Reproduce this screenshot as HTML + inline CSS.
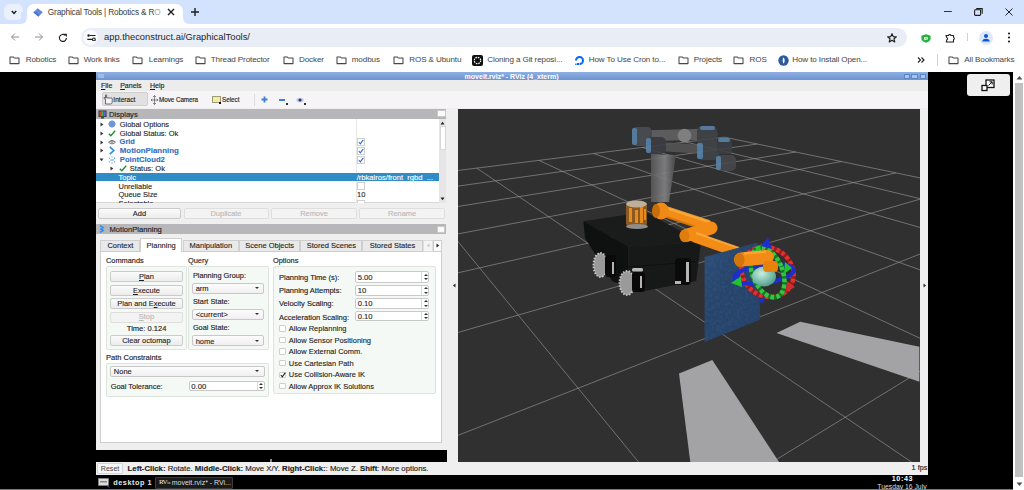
<!DOCTYPE html>
<html><head><meta charset="utf-8">
<style>
*{box-sizing:border-box;margin:0;padding:0}
html,body{width:1024px;height:490px;overflow:hidden;background:#000;font-family:"Liberation Sans",sans-serif}
.a{position:absolute}
#tabbar{left:0;top:0;width:1024px;height:24px;background:#d3e3fd}
#toolbar{left:0;top:24px;width:1024px;height:25px;background:#fff}
#bmbar{left:0;top:49px;width:1024px;height:23px;background:#fff}
.t{position:absolute;white-space:nowrap;line-height:1}
.bm{position:absolute;top:56.1px;font-size:8.1px;letter-spacing:-.12px;color:#444;white-space:nowrap;line-height:1}
.fold{position:absolute;top:55px;width:11px;height:9px}
.r{color:#1e1e1e;-webkit-text-stroke:.15px #1e1e1e}
.tx{-webkit-text-stroke:.12px currentColor}
.btn{background:linear-gradient(#fbfbfb,#ececec);border:1px solid #cbcbcb;border-radius:2px;display:flex;align-items:center;justify-content:center}
.btn span{font-size:7.45px;color:#1e1e1e;white-space:nowrap;line-height:1;-webkit-text-stroke:.12px currentColor}
.btn.dis span{color:#b9b9b9}
.btn.dis{background:#f3f3f3;border-color:#dedede}
.tab{top:239.5px;height:11.7px;background:#e9e9e9;border:1px solid #cfcfcf;border-bottom:none;display:flex;align-items:center;justify-content:center}
.tab span{font-size:7.5px;color:#1e1e1e;white-space:nowrap;line-height:1;-webkit-text-stroke:.12px currentColor}
.tab.act{top:238.4px;height:13.6px;background:#fff;z-index:2}
.grp{background:#f5f9f5;border:1px solid #dde3dd;border-radius:2px}
.cmb{background:linear-gradient(#fdfcfd,#f1eff1);border:1px solid #c8c8c8;border-radius:2px}
.cmb span{position:absolute;left:2.5px;top:50%;transform:translateY(-45%);font-size:7.5px;color:#1e1e1e;line-height:1;white-space:nowrap;-webkit-text-stroke:.12px #1e1e1e}
.cmb i{position:absolute;right:4.5px;top:50%;margin-top:-1px;border-left:2px solid transparent;border-right:2px solid transparent;border-top:2.5px solid #333}
.spn{background:#fff;border:1px solid #c9c9c9;border-radius:2px}
.spn span{position:absolute;left:1.3px;top:50%;transform:translateY(-42%);font-size:7.7px;color:#1e1e1e;line-height:1;white-space:nowrap;-webkit-text-stroke:.12px #1e1e1e}
.spn i{position:absolute;right:0;top:0;bottom:0;width:7px;border-left:1px solid #d8d8d8}
.spn i:before{content:"";position:absolute;left:1.5px;top:1.2px;border-left:2px solid transparent;border-right:2px solid transparent;border-bottom:2.4px solid #333}
.spn i:after{content:"";position:absolute;left:1.5px;bottom:1.2px;border-left:2px solid transparent;border-right:2px solid transparent;border-top:2.4px solid #333}
.chk{position:absolute;left:279px;width:6.5px;height:6.5px;background:#fff;border:1px solid #cfcfcf;border-radius:1px}
</style></head><body>
<!-- Chrome tab bar -->
<div class="a" id="tabbar"></div>
<div class="a" style="left:4.3px;top:4px;width:18.7px;height:16px;border-radius:6px;background:#eaf0fc"></div>
<svg class="a" style="left:10.5px;top:9.6px" width="6" height="5" viewBox="0 0 6 5"><path d="M.8 1 L3 3.4 L5.2 1" fill="none" stroke="#1f1f1f" stroke-width="1.5"/></svg>
<div class="a" style="left:27px;top:4px;width:156px;height:20px;background:#fff;border-radius:7px 7px 0 0"></div>
<div class="a" style="left:21px;top:18px;width:6px;height:6px;background:#fff"></div>
<div class="a" style="left:21px;top:12px;width:6px;height:12px;background:#d3e3fd;border-radius:0 0 6px 0"></div>
<div class="a" style="left:183px;top:18px;width:6px;height:6px;background:#fff"></div>
<div class="a" style="left:183px;top:12px;width:6px;height:12px;background:#d3e3fd;border-radius:0 0 0 6px"></div>
<svg class="a" style="left:32.5px;top:7.5px" width="10" height="9" viewBox="0 0 10 9"><defs><linearGradient id="fv" x1="0" y1="1" x2="1" y2="0"><stop offset="0" stop-color="#0d3fa8"/><stop offset=".5" stop-color="#5f8fe0"/><stop offset="1" stop-color="#7a5cc8"/></linearGradient></defs><path d="M.3 4.6 L4.6 .3 L9.7 4.3 L5.4 8.7 Z" fill="url(#fv)"/></svg>
<div class="t" style="left:47.8px;top:8.3px;font-size:8.3px;letter-spacing:-.19px;color:#3c3c3c">Graphical Tools | Robotics &amp; R<span style="color:#aaa">O</span></div>
<svg class="a" style="left:167px;top:8px" width="8" height="8" viewBox="0 0 8 8"><path d="M1 1L7 7M7 1L1 7" stroke="#1f1f1f" stroke-width="1.4"/></svg>
<svg class="a" style="left:190px;top:7px" width="10" height="10" viewBox="0 0 10 10"><path d="M5 1V9M1 5H9" stroke="#1f1f1f" stroke-width="1.4"/></svg>
<svg class="a" style="left:944.2px;top:11px" width="8" height="2"><rect width="7.8" height="1" fill="#333"/></svg>
<svg class="a" style="left:973.5px;top:7.5px" width="9" height="8" viewBox="0 0 9 8"><rect x=".6" y="1.8" width="6" height="5.6" rx=".8" fill="none" stroke="#1f1f1f" stroke-width="1.1"/><path d="M2.2 .6H8.2V5.8" fill="none" stroke="#1f1f1f" stroke-width="1.1"/></svg>
<svg class="a" style="left:1004.5px;top:7.5px" width="8" height="8" viewBox="0 0 8 8"><path d="M.5 .5L7.5 7.5M7.5 .5L.5 7.5" stroke="#1f1f1f" stroke-width="1"/></svg>

<!-- Toolbar -->
<div class="a" id="toolbar"></div>
<svg class="a" style="left:10px;top:32.3px" width="10" height="10" viewBox="0 0 10 10"><path d="M9 5H1.5M5 1.5L1.5 5L5 8.5" fill="none" stroke="#8a8f94" stroke-width="1"/></svg>
<svg class="a" style="left:34px;top:32.3px" width="10" height="10" viewBox="0 0 10 10"><path d="M1 5H8.5M5 1.5L8.5 5L5 8.5" fill="none" stroke="#8a8f94" stroke-width="1"/></svg>
<svg class="a" style="left:57.5px;top:32.5px" width="10" height="10" viewBox="0 0 10 10"><path d="M8.4 5A3.5 3.5 0 1 1 7.2 2.3" fill="none" stroke="#1f1f1f" stroke-width="1.15"/><path d="M5.6 .8H8.9V4.1Z" fill="#1f1f1f"/></svg>
<div class="a" style="left:80.6px;top:27.6px;width:826.4px;height:19.8px;border-radius:10px;background:#e9eef6"></div>
<div class="a" style="left:83px;top:29.5px;width:15px;height:15px;border-radius:8px;background:#f8fafd"></div>
<svg class="a" style="left:86.8px;top:34.3px" width="9" height="7" viewBox="0 0 9 7"><circle cx="1.6" cy="1.5" r="1.2" fill="#1f1f1f"/><path d="M3 1.5H8.5M.3 5.4H5" stroke="#1f1f1f" stroke-width="1.1"/><circle cx="6.9" cy="5.4" r="1.4" fill="none" stroke="#1f1f1f" stroke-width="1.1"/></svg>
<div class="t" style="left:104px;top:32.6px;font-size:9.35px;color:#1f1f1f">app.theconstruct.ai/GraphicalTools/</div>
<svg class="a" style="left:886.5px;top:32.8px" width="10" height="10" viewBox="0 0 11 11"><path d="M5.5 0.8L6.9 4L10.3 4.2L7.7 6.4L8.5 9.8L5.5 8L2.5 9.8L3.3 6.4L0.7 4.2L4.1 4Z" fill="none" stroke="#1f1f1f" stroke-width="1.3" stroke-linejoin="round"/></svg>
<svg class="a" style="left:920.7px;top:33.5px" width="10" height="9" viewBox="0 0 10 9"><path d="M5 .3L9.6 1.8V4.6C9.6 6.8 7.4 8.2 5 8.8C2.6 8.2 .4 6.8 .4 4.6V1.8Z" fill="#22b33a"/><path d="M3 3.2H7V5.6H5L3.6 6.6V5.6H3Z" fill="#fff"/><circle cx="5" cy="4.4" r=".6" fill="#22b33a"/></svg>
<svg class="a" style="left:944.5px;top:32.5px" width="11" height="10" viewBox="0 0 11 10"><path d="M1 2.5H3.5A1.3 1.3 0 0 1 6 2.5H8.5V4.2A1.3 1.3 0 0 1 8.5 6.6V9H1.3L1.8 6.8A1.2 1.2 0 0 0 1.8 4.6Z" fill="none" stroke="#1f1f1f" stroke-width="1.1" stroke-linejoin="round"/></svg>
<div class="a" style="left:967.3px;top:33px;width:1px;height:8px;background:#c7d3e6"></div>
<div class="a" style="left:979px;top:31px;width:13.5px;height:13.5px;border-radius:7px;background:#dde8fb"></div>
<svg class="a" style="left:981px;top:33px" width="10" height="10" viewBox="0 0 10 10"><circle cx="5" cy="3" r="2" fill="#0b57d0"/><path d="M1.2 8.6C1.5 6.4 3.2 5.7 5 5.7C6.8 5.7 8.5 6.4 8.8 8.6Z" fill="#0b57d0"/></svg>
<svg class="a" style="left:1007px;top:32px" width="4" height="11" viewBox="0 0 4 11"><circle cx="2" cy="1.5" r="1.1" fill="#1f1f1f"/><circle cx="2" cy="5.5" r="1.1" fill="#1f1f1f"/><circle cx="2" cy="9.5" r="1.1" fill="#1f1f1f"/></svg>

<!-- Bookmarks -->
<div class="a" id="bmbar"></div>
<svg class="a" style="left:9.00px;top:55px" width="11" height="10" viewBox="0 0 11 10"><path d="M1 1.9H4.2L5.3 3H10V8.6H1Z" fill="none" stroke="#474747" stroke-width="1.05" stroke-linejoin="round"/></svg>
<div class="bm" style="left:25.75px">Robotics</div>
<svg class="a" style="left:68.00px;top:55px" width="11" height="10" viewBox="0 0 11 10"><path d="M1 1.9H4.2L5.3 3H10V8.6H1Z" fill="none" stroke="#474747" stroke-width="1.05" stroke-linejoin="round"/></svg>
<div class="bm" style="left:83.75px">Work links</div>
<svg class="a" style="left:132.00px;top:55px" width="11" height="10" viewBox="0 0 11 10"><path d="M1 1.9H4.2L5.3 3H10V8.6H1Z" fill="none" stroke="#474747" stroke-width="1.05" stroke-linejoin="round"/></svg>
<div class="bm" style="left:148.75px">Learnings</div>
<svg class="a" style="left:195.00px;top:55px" width="11" height="10" viewBox="0 0 11 10"><path d="M1 1.9H4.2L5.3 3H10V8.6H1Z" fill="none" stroke="#474747" stroke-width="1.05" stroke-linejoin="round"/></svg>
<div class="bm" style="left:210.75px">Thread Protector</div>
<svg class="a" style="left:283.00px;top:55px" width="11" height="10" viewBox="0 0 11 10"><path d="M1 1.9H4.2L5.3 3H10V8.6H1Z" fill="none" stroke="#474747" stroke-width="1.05" stroke-linejoin="round"/></svg>
<div class="bm" style="left:299.00px">Docker</div>
<svg class="a" style="left:336.00px;top:55px" width="11" height="10" viewBox="0 0 11 10"><path d="M1 1.9H4.2L5.3 3H10V8.6H1Z" fill="none" stroke="#474747" stroke-width="1.05" stroke-linejoin="round"/></svg>
<div class="bm" style="left:351.75px">modbus</div>
<svg class="a" style="left:393.00px;top:55px" width="11" height="10" viewBox="0 0 11 10"><path d="M1 1.9H4.2L5.3 3H10V8.6H1Z" fill="none" stroke="#474747" stroke-width="1.05" stroke-linejoin="round"/></svg>
<div class="bm" style="left:409.25px">ROS &amp; Ubuntu</div>
<svg class="a" style="left:472.25px;top:54.5px" width="11" height="11" viewBox="0 0 11 11"><rect width="11" height="11" rx="2" fill="#111"/><circle cx="5.5" cy="5.5" r="3.2" fill="none" stroke="#fff" stroke-width="1.2" stroke-dasharray="1.6 0.9"/></svg>
<div class="bm" style="left:487.25px">Cloning a Git reposi...</div>
<svg class="a" style="left:574.00px;top:54.5px" width="11" height="11" viewBox="0 0 11 11"><path d="M5.5 10V8A2.5 2.5 0 1 0 3 5.5H1A4.5 4.5 0 1 1 5.5 10Z" fill="#0069ff"/><rect x="3" y="8" width="2" height="2" fill="#0069ff"/><rect x="1.2" y="8.6" width="1.4" height="1.4" fill="#0069ff"/></svg>
<div class="bm" style="left:588.75px">How To Use Cron to...</div>
<svg class="a" style="left:677.50px;top:55px" width="11" height="10" viewBox="0 0 11 10"><path d="M1 1.9H4.2L5.3 3H10V8.6H1Z" fill="none" stroke="#474747" stroke-width="1.05" stroke-linejoin="round"/></svg>
<div class="bm" style="left:693.75px">Projects</div>
<svg class="a" style="left:733.25px;top:55px" width="11" height="10" viewBox="0 0 11 10"><path d="M1 1.9H4.2L5.3 3H10V8.6H1Z" fill="none" stroke="#474747" stroke-width="1.05" stroke-linejoin="round"/></svg>
<div class="bm" style="left:749.50px">ROS</div>
<svg class="a" style="left:777.50px;top:54.5px" width="11" height="11" viewBox="0 0 11 11"><circle cx="5.5" cy="5.5" r="5.2" fill="#2d5aa0"/><path d="M5.5 2.5C7 3.5 7 7.5 5.5 8.5C4.4 7.5 4.4 3.5 5.5 2.5Z" fill="#fff"/></svg>
<div class="bm" style="left:792.25px">How to Install Open...</div>
<svg class="a" style="left:948.00px;top:55px" width="11" height="10" viewBox="0 0 11 10"><path d="M1 1.9H4.2L5.3 3H10V8.6H1Z" fill="none" stroke="#474747" stroke-width="1.05" stroke-linejoin="round"/></svg>
<div class="bm" style="left:964.25px">All Bookmarks</div>
<svg class="a" style="left:917px;top:56px" width="8" height="8" viewBox="0 0 8 8"><path d="M1 1.5L3.5 4L1 6.5M4.5 1.5L7 4L4.5 6.5" fill="none" stroke="#1f1f1f" stroke-width="1.1"/></svg>
<div class="a" style="left:937px;top:54px;width:1px;height:12px;background:#c7d3e6"></div>

<!-- RViz window -->
<div class="a" style="left:96px;top:72px;width:832px;height:390px;background:#efefef"></div>
<div class="a" style="left:96px;top:72px;width:832px;height:8px;background:linear-gradient(#8fb0e2,#6c93d3)"></div>
<div class="a" style="left:98px;top:74px;width:6px;height:4px;background:#a9c1ea;opacity:.8"></div>
<div class="t" style="left:464.6px;top:72.6px;font-size:7px;font-weight:bold;color:#fff">moveit.rviz* - RViz (4_xterm)</div>
<div class="a" style="left:903.5px;top:73.7px;width:6.8px;height:5.5px;background:#a8c2ea;border:1px solid #5d86c9"></div>
<div class="a" style="left:911.4px;top:73.7px;width:6.8px;height:5.5px;background:#a8c2ea;border:1px solid #5d86c9"></div>
<div class="a" style="left:919.7px;top:73.7px;width:6.8px;height:5.5px;background:#a8c2ea;border:1px solid #5d86c9"></div>
<!-- menubar -->
<div class="a" style="left:96px;top:80px;width:832px;height:11px;background:#ececec"></div>
<div class="t r" style="left:101px;top:81.8px;font-size:7px"><u>F</u>ile</div>
<div class="t r" style="left:120.2px;top:81.8px;font-size:7px"><u>P</u>anels</div>
<div class="t r" style="left:150px;top:81.8px;font-size:7px"><u>H</u>elp</div>
<!-- toolbar -->
<div class="a" style="left:96px;top:91px;width:832px;height:17px;background:#f6f4f6"></div>
<div class="a" style="left:102px;top:92px;width:45.5px;height:14.4px;background:#e1e1e1;border:1px solid #cfcfcf;border-radius:2px"></div>
<svg class="a" style="left:103px;top:94px" width="10" height="11" viewBox="0 0 10 11"><path d="M2.5 10V5.5L1 4.5V3.5L2.5 4.2V1.2C2.5 0.6 3.6 0.6 3.6 1.2V4H8.5C9.2 4 9.2 4.6 9.2 5V8C9.2 9.4 8.4 10 7.5 10Z" fill="#f4f4f4" stroke="#333" stroke-width=".7"/></svg>
<div class="t r" style="left:113.3px;top:97px;font-size:6.6px">Interact</div>
<svg class="a" style="left:149.5px;top:94.5px" width="9" height="10" viewBox="0 0 9 10"><path d="M4.5 0.5V9.5M1 5H8M4.5 0.5L3 2M4.5 0.5L6 2M4.5 9.5L3 8M4.5 9.5L6 8M1 5L2.3 3.8M1 5L2.3 6.2M8 5L6.7 3.8M8 5L6.7 6.2" stroke="#555" stroke-width=".7" fill="none"/></svg>
<div class="t r" style="left:159px;top:97px;font-size:6.3px;letter-spacing:-.05px">Move Camera</div>
<div class="a" style="left:212px;top:95.5px;width:8.5px;height:7.5px;background:#f3eba0;border:1px solid #9c9c7c"></div>
<div class="a" style="left:219px;top:101.5px;width:2px;height:2px;background:#111"></div>
<div class="t r" style="left:222px;top:97px;font-size:6.3px">Select</div>
<div class="a" style="left:254px;top:94px;width:1px;height:12px;background:#dcdcdc"></div>
<svg class="a" style="left:260.5px;top:96px" width="7" height="7" viewBox="0 0 7 7"><path d="M3.5 0.5V6.5M0.5 3.5H6.5" stroke="#3f7fd0" stroke-width="1.8"/></svg>
<div class="a" style="left:278.8px;top:98.6px;width:6.5px;height:2px;background:#3f7fd0"></div>
<div class="a" style="left:286px;top:103px;width:2px;height:1.5px;background:#333"></div>
<svg class="a" style="left:296px;top:96.5px" width="8" height="6" viewBox="0 0 8 6"><ellipse cx="4" cy="3" rx="3.8" ry="2.3" fill="#c8d0e0"/><circle cx="4" cy="3" r="1.6" fill="#223a8c"/></svg>
<div class="a" style="left:304px;top:103px;width:2px;height:1.5px;background:#333"></div>

<!-- Displays panel -->
<div class="a" style="left:96px;top:109.3px;width:350px;height:9.9px;background:#b7b6b9"></div>
<svg class="a" style="left:98px;top:110px" width="9" height="9" viewBox="0 0 9 9"><rect x=".5" y=".5" width="8" height="6.5" fill="#333"/><rect x="1.3" y="1.3" width="2.1" height="5" fill="#e04040"/><rect x="3.4" y="1.3" width="2.1" height="5" fill="#40c040"/><rect x="5.5" y="1.3" width="2.2" height="5" fill="#6060e0"/><rect x="3" y="7.2" width="3" height="1.3" fill="#333"/></svg>
<div class="t r" style="left:109px;top:111px;font-size:7.6px">Displays</div>
<div class="a" style="left:436.5px;top:110.4px;width:9px;height:7px;background:#fafafa;border:1px solid #c8c8c8"></div>
<div class="a" style="left:96px;top:119px;width:350px;height:84px;background:#fff;border-bottom:1px solid #d8d8d8"></div>
<div class="a" style="left:356px;top:119px;width:1px;height:84px;background:#e8e8e8"></div>
<!-- scrollbar -->
<div class="a" style="left:439px;top:119px;width:7px;height:84px;background:#e6e6e6"></div>
<div class="a" style="left:439.5px;top:126px;width:6px;height:24px;background:#fff;border:1px solid #d6d6d6"></div>
<svg class="a" style="left:440px;top:120.5px" width="5" height="4" viewBox="0 0 5 4"><path d="M0.5 3.5L2.5 0.8L4.5 3.5Z" fill="#222"/></svg>
<svg class="a" style="left:440px;top:197px" width="5" height="4" viewBox="0 0 5 4"><path d="M0.5 0.5L2.5 3.2L4.5 0.5Z" fill="#222"/></svg>
<!--TREE--><div class="a" style="left:96px;top:119px;width:343px;height:84px;overflow:hidden"><div class="a" style="left:-96px;top:-119px;width:1024px;height:490px"><svg class="a" style="left:99.5px;top:121.9px" width="4" height="5" viewBox="0 0 4 5"><path d="M.5 .5L3.3 2.5L.5 4.5Z" fill="#333"/></svg>
<svg class="a" style="left:107.5px;top:120.4px" width="8" height="8" viewBox="0 0 8 8"><path d="M4 .3L6.6 1.4L7.7 4L6.6 6.6L4 7.7L1.4 6.6L.3 4L1.4 1.4Z" fill="#6f97d8"/></svg>
<div class="t tx" style="left:119.7px;top:120.66px;font-size:7.48px;color:#1e1e1e">Global Options</div>
<svg class="a" style="left:99.5px;top:130.7px" width="4" height="5" viewBox="0 0 4 5"><path d="M.5 .5L3.3 2.5L.5 4.5Z" fill="#333"/></svg>
<svg class="a" style="left:108px;top:129.7px" width="8" height="7" viewBox="0 0 8 7"><path d="M.8 3.8L2.8 5.8L7.2 .8" fill="none" stroke="#1e8a2a" stroke-width="1.3"/></svg>
<div class="t tx" style="left:119.7px;top:129.50px;font-size:7.48px;color:#1e1e1e">Global Status: Ok</div>
<svg class="a" style="left:99.5px;top:139.6px" width="4" height="5" viewBox="0 0 4 5"><path d="M.5 .5L3.3 2.5L.5 4.5Z" fill="#333"/></svg>
<svg class="a" style="left:107.5px;top:139.1px" width="8" height="6" viewBox="0 0 8 6"><path d="M.5 3.2Q4 -.5 7.5 3.2Q4 6.5 .5 3.2Z" fill="none" stroke="#777" stroke-width="1"/><path d="M2 2.6H6M2.5 3.8H5.5" stroke="#777" stroke-width=".8"/></svg>
<div class="t tx" style="left:119.6px;top:138.36px;font-size:7.44px;font-weight:bold;color:#2f6fc0">Grid</div>
<svg class="a" style="left:99.5px;top:148.4px" width="4" height="5" viewBox="0 0 4 5"><path d="M.5 .5L3.3 2.5L.5 4.5Z" fill="#333"/></svg>
<svg class="a" style="left:109px;top:146.4px" width="6" height="9" viewBox="0 0 6 9"><path d="M.8 .8L4.8 4.5L.8 8.2" fill="none" stroke="#2b8ee8" stroke-width="1.7"/></svg>
<div class="t tx" style="left:119.8px;top:146.99px;font-size:7.86px;font-weight:bold;color:#2f6fc0">MotionPlanning</div>
<svg class="a" style="left:98.5px;top:158.3px" width="5" height="4" viewBox="0 0 5 4"><path d="M.5 .5L4.5 .5L2.5 3.3Z" fill="#333"/></svg>
<svg class="a" style="left:107.5px;top:155.8px" width="8" height="8" viewBox="0 0 8 8"><g fill="#3a8fe0"><circle cx="4" cy="4" r=".8"/><circle cx="1.4" cy="2.2" r=".6"/><circle cx="6.6" cy="2.2" r=".6"/><circle cx="1.4" cy="5.8" r=".6"/><circle cx="6.6" cy="5.8" r=".6"/><circle cx="4" cy=".8" r=".6"/><circle cx="4" cy="7.2" r=".6"/><circle cx="2.6" cy="4" r=".5"/><circle cx="5.4" cy="4" r=".5"/></g></svg>
<div class="t tx" style="left:119.8px;top:155.93px;font-size:7.66px;font-weight:bold;color:#2f6fc0">PointCloud2</div>
<svg class="a" style="left:109.9px;top:166.1px" width="4" height="5" viewBox="0 0 4 5"><path d="M.5 .5L3.3 2.5L.5 4.5Z" fill="#333"/></svg>
<svg class="a" style="left:118.6px;top:165.1px" width="8" height="7" viewBox="0 0 8 7"><path d="M.8 3.8L2.8 5.8L7.2 .8" fill="none" stroke="#1e8a2a" stroke-width="1.3"/></svg>
<div class="t tx" style="left:129.8px;top:164.84px;font-size:7.52px;color:#1e1e1e">Status: Ok</div>
<div class="a" style="left:96px;top:172.7px;width:343px;height:8.4px;background:#308cc6"></div>
<div class="t tx" style="left:118.5px;top:173.70px;font-size:7.48px;color:#fff">Topic</div>
<div class="t tx" style="left:356.7px;top:173.64px;font-size:7.6px;color:#fff">/rbkairos/front_rgbd_...</div>
<div class="t tx" style="left:118.5px;top:182.54px;font-size:7.48px;color:#1e1e1e">Unreliable</div>
<div class="a" style="left:357px;top:182.3px;width:8px;height:8px;background:#fff;border:1px solid #cfcfcf"></div>
<div class="t tx" style="left:118.5px;top:191.38px;font-size:7.48px;color:#1e1e1e">Queue Size</div>
<div class="t tx" style="left:357px;top:191.38px;font-size:7.48px;color:#1e1e1e">10</div>
<div class="t tx" style="left:118.5px;top:200.22px;font-size:7.48px;color:#1e1e1e">Selectable</div>
<div class="a" style="left:357px;top:138.1px;width:8px;height:8px;background:#fff;border:1px solid #cfcfcf"></div><svg class="a" style="left:358px;top:139.1px" width="6" height="6" viewBox="0 0 6 6"><path d="M.8 3L2.3 4.8L5.3 .8" fill="none" stroke="#2f6fc0" stroke-width="1.1"/></svg>
<div class="a" style="left:357px;top:146.9px;width:8px;height:8px;background:#fff;border:1px solid #cfcfcf"></div><svg class="a" style="left:358px;top:147.9px" width="6" height="6" viewBox="0 0 6 6"><path d="M.8 3L2.3 4.8L5.3 .8" fill="none" stroke="#2f6fc0" stroke-width="1.1"/></svg>
<div class="a" style="left:357px;top:155.8px;width:8px;height:8px;background:#fff;border:1px solid #cfcfcf"></div><svg class="a" style="left:358px;top:156.8px" width="6" height="6" viewBox="0 0 6 6"><path d="M.8 3L2.3 4.8L5.3 .8" fill="none" stroke="#2f6fc0" stroke-width="1.1"/></svg>
<div class="a" style="left:357px;top:200.0px;width:8px;height:8px;background:#fff;border:1px solid #cfcfcf"></div></div></div><!--/TREE-->
<!-- buttons row -->
<div class="btn a" style="left:97.6px;top:208.4px;width:83.7px;height:11px"><span>Add</span></div>
<div class="btn a dis" style="left:183.5px;top:208.4px;width:85px;height:11px"><span>Duplicate</span></div>
<div class="btn a dis" style="left:271px;top:208.4px;width:86px;height:11px"><span>Remove</span></div>
<div class="btn a dis" style="left:359px;top:208.4px;width:86.3px;height:11px"><span>Rename</span></div>

<!-- MotionPlanning panel -->
<div class="a" style="left:96px;top:224.1px;width:350px;height:9.9px;background:#b7b6b9"></div>
<svg class="a" style="left:98.5px;top:225.2px" width="6" height="8" viewBox="0 0 6 8"><path d="M1 .6L4.2 2.6L1.8 4L4.2 5.4L1 7.4" fill="none" stroke="#2b8ee8" stroke-width="1.5"/></svg>
<div class="t r" style="left:109.5px;top:225.8px;font-size:7.6px">MotionPlanning</div>
<div class="a" style="left:436.6px;top:226px;width:8.7px;height:7.2px;background:#fafafa;border:1px solid #c8c8c8"></div>

<!-- tabs -->
<div class="a" style="left:100.4px;top:251px;width:341.6px;height:191.8px;background:#fff;border:1px solid #cdcdcd"></div>
<div class="tab a" style="left:100.4px;width:40px"><span>Context</span></div>
<div class="tab a act" style="left:140.2px;width:42px"><span>Planning</span></div>
<div class="tab a" style="left:182.7px;width:56.3px"><span>Manipulation</span></div>
<div class="tab a" style="left:239px;width:61.4px"><span>Scene Objects</span></div>
<div class="tab a" style="left:300.4px;width:62px"><span>Stored Scenes</span></div>
<div class="tab a" style="left:362.4px;width:60.2px"><span>Stored States</span></div>
<div class="a" style="left:423px;top:239.5px;width:10px;height:12px;background:#f4f4f4;border:1px solid #ddd"></div>
<div class="a" style="left:433px;top:239.5px;width:8.5px;height:12px;background:#fafafa;border:1px solid #cfcfcf"></div>
<svg class="a" style="left:426px;top:243px" width="4" height="5" viewBox="0 0 4 5"><path d="M3.5 .5L.8 2.5L3.5 4.5Z" fill="#c8c8c8"/></svg>
<svg class="a" style="left:435.5px;top:243px" width="4" height="5" viewBox="0 0 4 5"><path d="M.5 .5L3.2 2.5L.5 4.5Z" fill="#222"/></svg>

<!-- Commands -->
<div class="t r" style="left:106px;top:257px;font-size:7.4px">Commands</div>
<div class="grp a" style="left:106.3px;top:266.3px;width:80.8px;height:84px"></div>
<div class="btn a" style="left:110.2px;top:271.4px;width:72.5px;height:11px"><span><u>P</u>lan</span></div>
<div class="btn a" style="left:110.2px;top:284.9px;width:72.5px;height:11px"><span><u>E</u>xecute</span></div>
<div class="btn a" style="left:110.2px;top:298.3px;width:72.5px;height:11px"><span>Plan and E<u>x</u>ecute</span></div>
<div class="btn a dis" style="left:110.2px;top:311.7px;width:72.5px;height:11px"><span><u>S</u>top</span></div>
<div class="t r" style="left:126.8px;top:325.1px;font-size:7.55px">Time: 0.124</div>
<div class="btn a" style="left:110.2px;top:335px;width:72.5px;height:11px"><span>Clear octomap</span></div>

<!-- Query -->
<div class="t r" style="left:188px;top:257px;font-size:7.4px">Query</div>
<div class="grp a" style="left:188.4px;top:266.3px;width:80.7px;height:84px"></div>
<div class="t r" style="left:192.9px;top:271.9px;font-size:7.35px">Planning Group:</div>
<div class="cmb a" style="left:192.2px;top:282.8px;width:72.3px;height:11px"><span>arm</span><i></i></div>
<div class="t r" style="left:192.9px;top:297.6px;font-size:7.35px">Start State:</div>
<div class="cmb a" style="left:192.2px;top:308.7px;width:72.3px;height:11.4px"><span>&lt;current&gt;</span><i></i></div>
<div class="t r" style="left:192.9px;top:323.8px;font-size:7.35px">Goal State:</div>
<div class="cmb a" style="left:192.2px;top:335px;width:72.3px;height:11px"><span>home</span><i></i></div>

<!-- Options -->
<div class="t r" style="left:273px;top:257px;font-size:7.35px">Options</div>
<div class="grp a" style="left:273.4px;top:266.4px;width:162.3px;height:127.9px"></div>
<div class="t r" style="left:279px;top:274.1px;font-size:7.5px">Planning Time (s):</div>
<div class="t r" style="left:279px;top:287.2px;font-size:7.5px">Planning Attempts:</div>
<div class="t r" style="left:279px;top:300.4px;font-size:7.5px">Velocity Scaling:</div>
<div class="t r" style="left:279px;top:313.5px;font-size:7.5px">Acceleration Scaling:</div>
<div class="spn a" style="left:355.4px;top:271.4px;width:74px;height:11.2px"><span>5.00</span><i></i></div>
<div class="spn a" style="left:355.4px;top:284.6px;width:74px;height:11.1px"><span>10</span><i></i></div>
<div class="spn a" style="left:355.4px;top:297.9px;width:74px;height:10.8px"><span>0.10</span><i></i></div>
<div class="spn a" style="left:355.4px;top:310.7px;width:74px;height:10.8px"><span>0.10</span><i></i></div>
<!--CHECKS--><div class="chk" style="top:325.35px"></div>
<div class="t tx" style="left:288.8px;top:325.26px;font-size:7.47px;color:#1e1e1e">Allow Replanning</div>
<div class="chk" style="top:336.75px"></div>
<div class="t tx" style="left:288.8px;top:336.66px;font-size:7.47px;color:#1e1e1e">Allow Sensor Positioning</div>
<div class="chk" style="top:348.25px"></div>
<div class="t tx" style="left:288.8px;top:348.16px;font-size:7.47px;color:#1e1e1e">Allow External Comm.</div>
<div class="chk" style="top:359.65px"></div>
<div class="t tx" style="left:288.8px;top:359.56px;font-size:7.47px;color:#1e1e1e">Use Cartesian Path</div>
<div class="chk" style="top:371.55px"></div>
<svg class="a" style="left:279.5px;top:371.8px" width="6" height="6" viewBox="0 0 6 6"><path d="M.8 3L2.3 4.8L5.3 .6" fill="none" stroke="#222" stroke-width="1.1"/></svg>
<div class="t tx" style="left:288.8px;top:371.46px;font-size:7.47px;color:#1e1e1e">Use Collision-Aware IK</div>
<div class="chk" style="top:382.95px"></div>
<div class="t tx" style="left:288.8px;top:382.86px;font-size:7.47px;color:#1e1e1e">Allow Approx IK Solutions</div><!--/CHECKS-->
<!-- Path constraints -->
<div class="t r" style="left:106px;top:353.8px;font-size:7.5px">Path Constraints</div>
<div class="grp a" style="left:105.9px;top:363.2px;width:163.5px;height:33.4px"></div>
<div class="cmb a" style="left:110.3px;top:365.8px;width:154.3px;height:11.4px"><span>None</span><i></i></div>
<div class="t r" style="left:110.7px;top:382.8px;font-size:7.45px">Goal Tolerance:</div>
<div class="spn a" style="left:189px;top:380.8px;width:75.6px;height:10.5px"><span>0.00</span><i></i></div>

<!-- viewport -->
<div class="a" style="left:458px;top:109px;width:462px;height:353px;background:#303030;overflow:hidden" id="vp"><!--GRID--><svg class="a" style="left:0;top:0" width="462" height="353"><path d="M-487.4 122.3L-4493.5 2337.4 M-348.0 104.9L-2921.1 2334.7 M-232.6 90.5L-1348.7 2332.0 M-135.6 78.3L223.7 2329.2 M-52.8 68.0L1796.2 2326.5 M18.7 59.1L3368.6 2323.8 M80.9 51.3L2336.4 1104.6 M135.7 44.5L1796.0 636.4 M184.2 38.4L1565.1 436.4 M227.6 33.0L1437.0 325.4 M266.5 28.2L1355.6 254.9 M-487.4 122.3L266.5 28.2 M-544.3 153.7L299.4 35.0 M-624.7 198.2L337.8 43.0 M-747.5 266.1L383.3 52.5 M-958.0 382.4L437.9 63.9 M-1401.7 627.8L504.9 77.8 M-2950.3 1484.1L588.8 95.3 M-2910.1 2334.7L697.1 117.8 M-692.5 2330.8L842.1 148.0 M1525.1 2327.0L1046.4 190.5 M3742.7 2323.1L1355.6 254.9" stroke="#a0a0a0" stroke-width=".9" fill="none" opacity=".65"/></svg><!--/GRID--><!--SCENE--><svg class="a" style="left:0;top:0" width="462" height="353" viewBox="458 109 462 353">
<defs>
<linearGradient id="org" gradientUnits="userSpaceOnUse" x1="0" y1="-5" x2="0" y2="5"><stop offset="0" stop-color="#ffb446"/><stop offset=".5" stop-color="#f28c14"/><stop offset="1" stop-color="#c06a00"/></linearGradient>
<linearGradient id="ghost" x1="0" y1="0" x2="1" y2="0"><stop offset="0" stop-color="#5a5a5c"/><stop offset=".55" stop-color="#858587"/><stop offset="1" stop-color="#4a4a4c"/></linearGradient>
<radialGradient id="sph" cx=".4" cy=".35" r=".7"><stop offset="0" stop-color="#c8f0e0"/><stop offset="1" stop-color="#4a9a88"/></radialGradient>
<linearGradient id="plt" x1="0" y1="0" x2="1" y2="1"><stop offset="0" stop-color="#3a6090" stop-opacity=".5"/><stop offset=".5" stop-color="#2c4d77" stop-opacity="0"/><stop offset="1" stop-color="#1f3a60" stop-opacity=".5"/></linearGradient>
<filter id="nz" filterUnits="userSpaceOnUse" x="700" y="240" width="65" height="105"><feTurbulence type="fractalNoise" baseFrequency=".35" numOctaves="2" seed="3"/><feColorMatrix values="0 0 0 0 .15  0 0 0 0 .3  0 0 0 0 .5  0 0 0 1.4 -.55"/><feComposite in2="SourceGraphic" operator="in"/></filter>
<filter id="bl" filterUnits="userSpaceOnUse" x="458" y="109" width="462" height="353"><feGaussianBlur stdDeviation=".6"/></filter>
</defs>
<!-- white strips -->
<polygon points="679,373.4 712.3,360 779,462 690.3,462" fill="#a3a2a5"/>
<polygon points="776.5,332.9 800.2,321.8 919.4,346.7 919.4,381.8" fill="#a3a2a5"/>
<!-- ghost arm -->
<g opacity=".88" filter="url(#bl)">
<polygon points="651,154 676,155 669,202 651,202" fill="url(#ghost)"/>
<path d="M640 136 L712 134" stroke="#636365" stroke-width="11" stroke-linecap="round"/>
<path d="M652 146 L712 150" stroke="#555557" stroke-width="9"/>
<rect x="632" y="127" width="20" height="19" rx="5" fill="#4c4f55"/>
<rect x="632" y="128" width="5" height="17" rx="2" fill="#5a86ae"/>
<rect x="646" y="137" width="20" height="17" rx="5" fill="#3c3e44"/>
<rect x="646" y="138" width="5" height="15" rx="2" fill="#5a86ae"/>
<circle cx="684.5" cy="135.5" r="6.8" fill="#8a8a8c"/>
<rect x="697" y="126" width="20" height="20" rx="5" fill="#43454a"/>
<rect x="700" y="126" width="15" height="4" rx="2" fill="#5a86ae"/>
<rect x="697" y="142" width="22" height="18" rx="5" fill="#43454a"/>
<rect x="697" y="143" width="6" height="16" rx="2" fill="#5a86ae"/>
<rect x="717" y="139" width="15" height="15" rx="4" fill="#3c3e44"/>
<rect x="718" y="138" width="12" height="4" rx="2" fill="#5a86ae"/>
<rect x="716" y="155" width="20" height="16" rx="5" fill="#484a4e"/>
<rect x="716" y="156" width="5" height="14" rx="2" fill="#5a86ae"/>
</g>
<!-- robot body -->
<polygon points="583.4,221.3 645,212 701,242 628.3,246.4" fill="#1a1c1b"/>
<polygon points="583.4,221.3 628.3,246.4 628.3,287 612,281 585,238" fill="#0f1010"/>
<polygon points="628.3,246.4 701,242 696.3,281 644.3,291 628.3,287" fill="#171818"/>
<path d="M628.3 267 L696.3 261.7" stroke="#0c0c0c" stroke-width=".8"/>
<!-- wheels -->
<g filter="url(#bl)">
<ellipse cx="600.5" cy="265" rx="7" ry="12" fill="#9a9a9a" stroke="#c8c8c8" stroke-width="2" stroke-dasharray="1.5 1.5"/>
<ellipse cx="627" cy="283" rx="7.5" ry="12" fill="#9a9a9a" stroke="#c8c8c8" stroke-width="2" stroke-dasharray="1.5 1.5"/>
</g>
<g fill="#0a0a0a"><rect x="605" y="255" width="11" height="22" rx="3"/><rect x="632" y="272" width="13" height="20" rx="3"/><rect x="675" y="258" width="16" height="27" rx="4"/></g>
<g fill="#e0e0e0" opacity=".8" filter="url(#bl)"><rect x="686" y="262" width="3" height="20"/><rect x="632" y="268" width="11" height="3.5" rx="1.5"/><rect x="675" y="281" width="6" height="3"/><rect x="612" y="262" width="2" height="12"/><rect x="640" y="276" width="2" height="12"/></g>
<!-- orange base -->
<rect x="626" y="203" width="21" height="23" rx="3" fill="#8a5a24"/>
<ellipse cx="636.5" cy="204" rx="10.5" ry="3.5" fill="#c0b098"/>
<g fill="#e88a1a" filter="url(#bl)"><rect x="629" y="208" width="3" height="14"/><rect x="635" y="210" width="3" height="13"/><rect x="640" y="207" width="3" height="16"/><rect x="644" y="209" width="2" height="11"/></g>
<ellipse cx="637" cy="226.5" rx="11" ry="2.5" fill="#8e8e8e"/>
<!-- orange arm -->
<g filter="url(#bl)">
<path d="M661 210.5 L708 226" stroke="#f28c14" stroke-width="10.5" stroke-linecap="round"/>
<path d="M663 206.5 L709 221.5" stroke="#ffae3c" stroke-width="3" stroke-linecap="round" opacity=".8"/>
<path d="M662 215.5 L706 230.5" stroke="#c06800" stroke-width="2" opacity=".6"/>
<ellipse cx="661" cy="211" rx="8" ry="8.5" fill="#f08a12"/>
<ellipse cx="656" cy="211" rx="4" ry="7" fill="#c86e08"/>
<path d="M686 235.5 L711 228" stroke="#f28c14" stroke-width="13" stroke-linecap="round"/>
<ellipse cx="684.5" cy="236" rx="4.8" ry="6.2" fill="#de7c0a"/>
<path d="M695 237.5 L739 253" stroke="#f28c14" stroke-width="10" stroke-linecap="round"/>
<path d="M696 233 L739 248" stroke="#ffb040" stroke-width="2.2" opacity=".8"/>
</g>
<!-- plate -->
<polygon points="704.6,257.1 757.6,242.5 760.3,319.5 704.6,342" fill="#26436a"/>
<polygon points="704.6,257.1 757.6,242.5 760.3,319.5 704.6,342" fill="#000" filter="url(#nz)" opacity=".22"/>
<polygon points="704.6,257.1 757.6,242.5 760.3,319.5 704.6,342" fill="url(#plt)"/>
<!-- marker rings -->
<g fill="none" stroke-width="4.5" filter="url(#bl)">
<ellipse cx="767.5" cy="272" rx="27" ry="24" transform="rotate(35 767.5 272)" stroke="#9a1a1a"/>
<ellipse cx="767.5" cy="272" rx="27" ry="24" transform="rotate(35 767.5 272)" stroke="#e03030" stroke-dasharray="3.5 2.5"/>
<ellipse cx="764" cy="274" rx="30" ry="9" transform="rotate(-8 764 274)" stroke="#1d2fd0" stroke-width="4"/>
<ellipse cx="767.5" cy="272.5" rx="15" ry="26" transform="rotate(-22 767.5 272.5)" stroke="#127a22"/>
<ellipse cx="767.5" cy="272.5" rx="15" ry="26" transform="rotate(-22 767.5 272.5)" stroke="#36c444" stroke-dasharray="3.5 2.5"/>
</g>
<g filter="url(#bl)">
<polygon points="761,246 768,237 772,249" fill="#1d2fd0"/>
<polygon points="754,251 760,245 762,254" fill="#20c030"/>
<polygon points="785,262 792,268 784,274" fill="#20c030"/>
<polygon points="787,281 795,287 786,292" fill="#d42a2a"/>
<polygon points="731,283 741,276 742,287" fill="#20c030"/>
<polygon points="734,275 741,273 738,279" fill="#1d2fd0"/>
<polygon points="758,299 765,298 762,304" fill="#1d2fd0"/>
</g>
<!-- wrist + sphere -->
<ellipse cx="764" cy="276.5" rx="12" ry="10" fill="url(#sph)"/>
<g filter="url(#bl)">
<path d="M741 259.5 L767 257" stroke="#f28c14" stroke-width="14" stroke-linecap="round"/>
<rect x="763" y="261" width="15" height="11" rx="4" fill="#e8820e"/>
<path d="M744 253.5 L766 251.5" stroke="#ffb040" stroke-width="2.5" opacity=".7"/>
<ellipse cx="739.5" cy="260" rx="5" ry="7" fill="#d27408"/>
</g>
</svg>
<!--/SCENE--></div>
<svg class="a" style="left:451.5px;top:282.5px" width="4" height="5" viewBox="0 0 4 5"><path d="M3.5 .5L.8 2.5L3.5 4.5Z" fill="#333"/></svg>
<svg class="a" style="left:922.5px;top:282.5px" width="4" height="5" viewBox="0 0 4 5"><path d="M.5 .5L3.2 2.5L.5 4.5Z" fill="#333"/></svg>
<!-- black band -->
<div class="a" style="left:96px;top:449.9px;width:350.7px;height:11.9px;background:#000"></div>
<div class="a" style="left:269.5px;top:459px;width:2.5px;height:3px;background:#888"></div>
<!-- status bar -->
<div class="a" style="left:96px;top:462px;width:832px;height:13px;background:#efefef"></div>
<div class="a" style="left:96.8px;top:463px;width:26.2px;height:11px;background:#f7f7f7;border:1px solid #d6d6d6;border-radius:1px"></div>
<div class="t r" style="left:100.8px;top:465.8px;font-size:7.1px;color:#444;-webkit-text-stroke:0">Reset</div>
<div class="t r" style="left:127.6px;top:465px;font-size:7.75px"><b>Left-Click:</b> Rotate. <b>Middle-Click:</b> Move X/Y. <b>Right-Click:</b>: Move Z. <b>Shift</b>: More options.</div>
<div class="t r" style="left:911.6px;top:464px;font-size:7.24px">1 fps</div>

<!-- right-side floating button -->
<div class="a" style="left:967px;top:74.2px;width:42.5px;height:21.5px;background:#efefef;border-radius:3px"></div>
<svg class="a" style="left:981px;top:78.5px" width="14" height="13" viewBox="0 0 14 13"><rect x="5" y="1" width="8" height="7.5" fill="#fff" stroke="#111" stroke-width="1.3"/><rect x="1" y="6.5" width="5" height="5" fill="#fff" stroke="#111" stroke-width="1.3"/><path d="M7.5 6.5L11 3M8.5 2.8H11.2V5.5" fill="none" stroke="#111" stroke-width="1"/></svg>
<!-- page scrollbar -->
<div class="a" style="left:1013px;top:72px;width:11px;height:418px;background:#fff"></div>
<div class="a" style="left:1015px;top:82.5px;width:8px;height:394px;background:#c1c1c1"></div>
<svg class="a" style="left:1015.5px;top:74.5px" width="7" height="5" viewBox="0 0 7 5"><path d="M.5 4.5L3.5 1L6.5 4.5Z" fill="#505050"/></svg>
<svg class="a" style="left:1015.5px;top:481.5px" width="7" height="5" viewBox="0 0 7 5"><path d="M.5 .5L3.5 4L6.5 .5Z" fill="#505050"/></svg>
<!-- taskbar -->
<div class="a" style="left:96px;top:475px;width:917px;height:15px;background:#000"></div>
<svg class="a" style="left:97.5px;top:478px" width="12" height="10" viewBox="0 0 12 10"><rect x=".5" y=".5" width="10" height="7" fill="#ddd" stroke="#888" stroke-width=".6"/><rect x="2" y="3" width="7" height="1.5" fill="#888"/><path d="M8.5 7L11 9.5" stroke="#3a6fd0" stroke-width="1"/></svg>
<div class="t" style="left:113.3px;top:479px;font-size:7.3px;font-weight:bold;color:#e8e8e8;letter-spacing:.52px">desktop 1</div>
<div class="a" style="left:155.3px;top:476.5px;width:77.7px;height:12px;background:#1a1a1a;border:1px solid #3a3a3a;border-radius:1px"></div>
<div class="t" style="left:159px;top:479px;font-size:7px;color:#eee;font-family:'Liberation Serif',serif;letter-spacing:-.5px">RV<span style="font-size:4.5px;letter-spacing:0">iz</span></div>
<div class="t" style="left:171.7px;top:479.3px;font-size:7px;color:#ddd">moveit.rviz* - RVi...</div>
<div class="t" style="left:891.7px;top:475.2px;font-size:7.2px;font-weight:bold;color:#fff;letter-spacing:.6px">10:43</div>
<div class="t" style="left:877.3px;top:483.6px;font-size:6.8px;color:#ddd">Tuesday 16 July</div>
<div class="a" style="left:0;top:489px;width:1013px;height:1px;background:#7a7a7a"></div>

</body></html>
